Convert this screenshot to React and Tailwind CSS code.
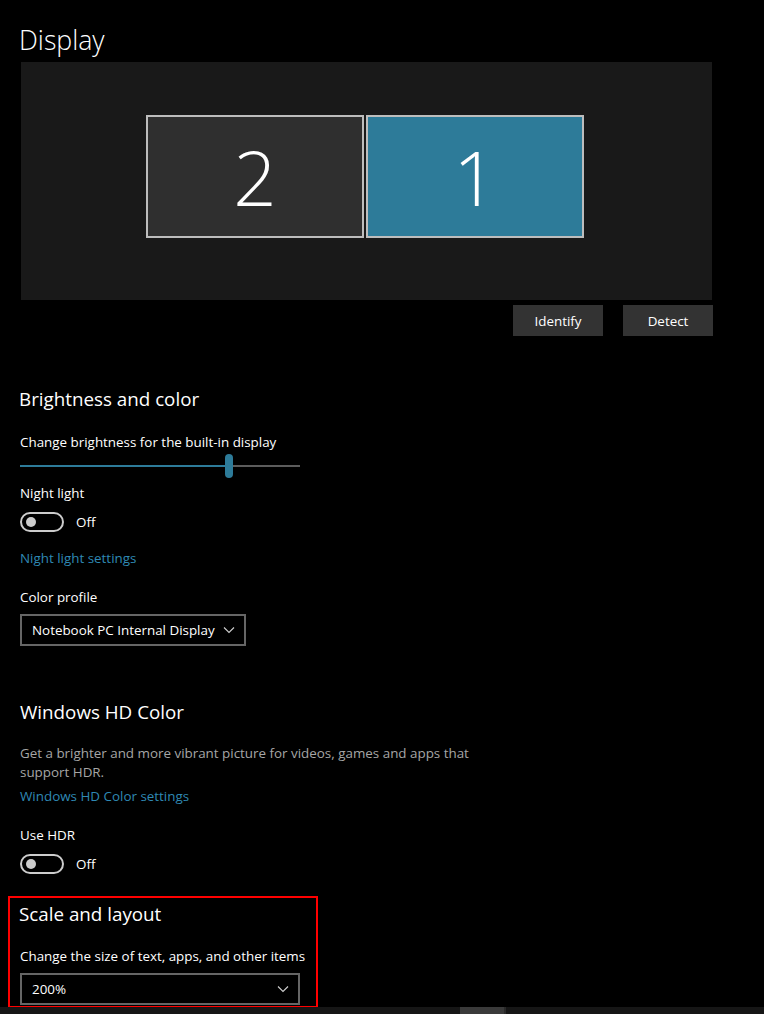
import React from "react";

const font = { fontFamily: '"Open Sans", "Noto Sans", sans-serif' };

function Toggle() {
  return (
    <div className="mt-[9px] flex h-[20px] items-center">
      <div className="flex h-[20px] w-[44px] items-center rounded-full border-2 border-[#cccccc] pl-[4px]">
        <div className="h-[10px] w-[10px] rounded-full bg-[#cccccc]" />
      </div>
      <span className="ml-[12px] text-[13.4px] leading-[20px] text-white">Off</span>
    </div>
  );
}

function Chevron() {
  return (
    <svg width="12" height="8" viewBox="0 0 12 8" fill="none">
      <path d="M1 1.5 L6 6.5 L11 1.5" stroke="#d0d0d0" strokeWidth="1.1" />
    </svg>
  );
}

export default function App() {
  return (
    <div className="relative h-[1014px] w-[764px] overflow-hidden bg-black pl-[19px]" style={font}>
      <div className="pt-[22px] text-[26.7px] font-light leading-[36px] text-white">Display</div>

      <div className="mt-[4px] ml-[2px] h-[238px] w-[691px] bg-[#191919] pl-[125px] pt-[53px]">
        <div className="flex gap-[2px]">
          <div className="flex h-[123px] w-[218px] items-center justify-center border-2 border-[#bdbdbd] bg-[#2f2f2f] text-[76px] font-light text-white">
            2
          </div>
          <div className="flex h-[123px] w-[218px] items-center justify-center border-2 border-[#bdbdbd] bg-[#2d7b99] text-[76px] font-light text-white">
            1
          </div>
        </div>
      </div>

      <div className="mt-[5px] flex w-[694px] justify-end gap-[20px]">
        <div className="flex h-[31px] w-[90px] items-center justify-center bg-[#333333] pt-[2px] text-[13.4px] text-white">Identify</div>
        <div className="flex h-[31px] w-[90px] items-center justify-center bg-[#333333] pt-[2px] text-[13.4px] text-white">Detect</div>
      </div>

      <div className="mt-[49px] text-[18.8px] leading-[28px] text-white">Brightness and color</div>
      <div className="mt-[19px] ml-[1px] text-[13.4px] leading-[20px] text-white">Change brightness for the built-in display</div>

      <div className="relative mt-[2px] ml-[1px] flex h-[24px] w-[280px] items-center">
        <div className="h-[2px] w-[205px] bg-[#2d7b99]" />
        <div className="h-[24px] w-[8px] rounded-full bg-[#2d7b99]" />
        <div className="h-[2px] flex-1 bg-[#5c5c5c]" />
      </div>

      <div className="mt-[5px] ml-[1px] text-[13.4px] leading-[20px] text-white">Night light</div>
      <div className="ml-[1px]"><Toggle /></div>

      <div className="mt-[16px] ml-[1px] text-[13.4px] leading-[20px] text-[#2f89b4]">Night light settings</div>
      <div className="mt-[19px] ml-[1px] text-[13.4px] leading-[20px] text-white">Color profile</div>

      <div className="mt-[7px] ml-[1px] flex h-[32px] w-[226px] items-center justify-between border-2 border-[#666666] pl-[10px] pr-[9px]">
        <span className="whitespace-nowrap text-[13.4px] text-white">Notebook PC Internal Display</span>
        <Chevron />
      </div>

      <div className="mt-[52px] ml-[1px] text-[18.8px] leading-[28px] text-white">Windows HD Color</div>
      <div className="mt-[18px] ml-[1px] w-[460px] text-[13.4px] leading-[19px] text-[#a6a6a6]">
        Get a brighter and more vibrant picture for videos, games and apps that support HDR.
      </div>
      <div className="mt-[4px] ml-[1px] text-[13.4px] leading-[20px] text-[#2f89b4]">Windows HD Color settings</div>
      <div className="mt-[19px] ml-[1px] text-[13.4px] leading-[20px] text-white">Use HDR</div>
      <div className="ml-[1px]"><Toggle /></div>

      <div className="mt-[22px] ml-[-11px] w-[310px] border-2 border-[#ff0000] pb-[1px] pl-[9px] pt-[2px]">
        <div className="text-[18.8px] leading-[28px] text-white">Scale and layout</div>
        <div className="mt-[18px] ml-[1px] whitespace-nowrap text-[13.4px] leading-[20px] text-white">Change the size of text, apps, and other items</div>
        <div className="mt-[7px] ml-[1px] flex h-[32px] w-[280px] items-center justify-between border-2 border-[#666666] pl-[10px] pr-[9px]">
          <span className="text-[13.4px] text-white">200%</span>
          <Chevron />
        </div>
      </div>

      <div className="absolute left-0 top-[1007px] flex h-[7px] w-[764px] bg-[#161616]">
        <div className="ml-[460px] h-[7px] w-[44px] bg-[#3a3a3a]" />
        <div className="h-[7px] w-[2px] bg-[#2a2a2a]" />
      </div>
    </div>
  );
}
